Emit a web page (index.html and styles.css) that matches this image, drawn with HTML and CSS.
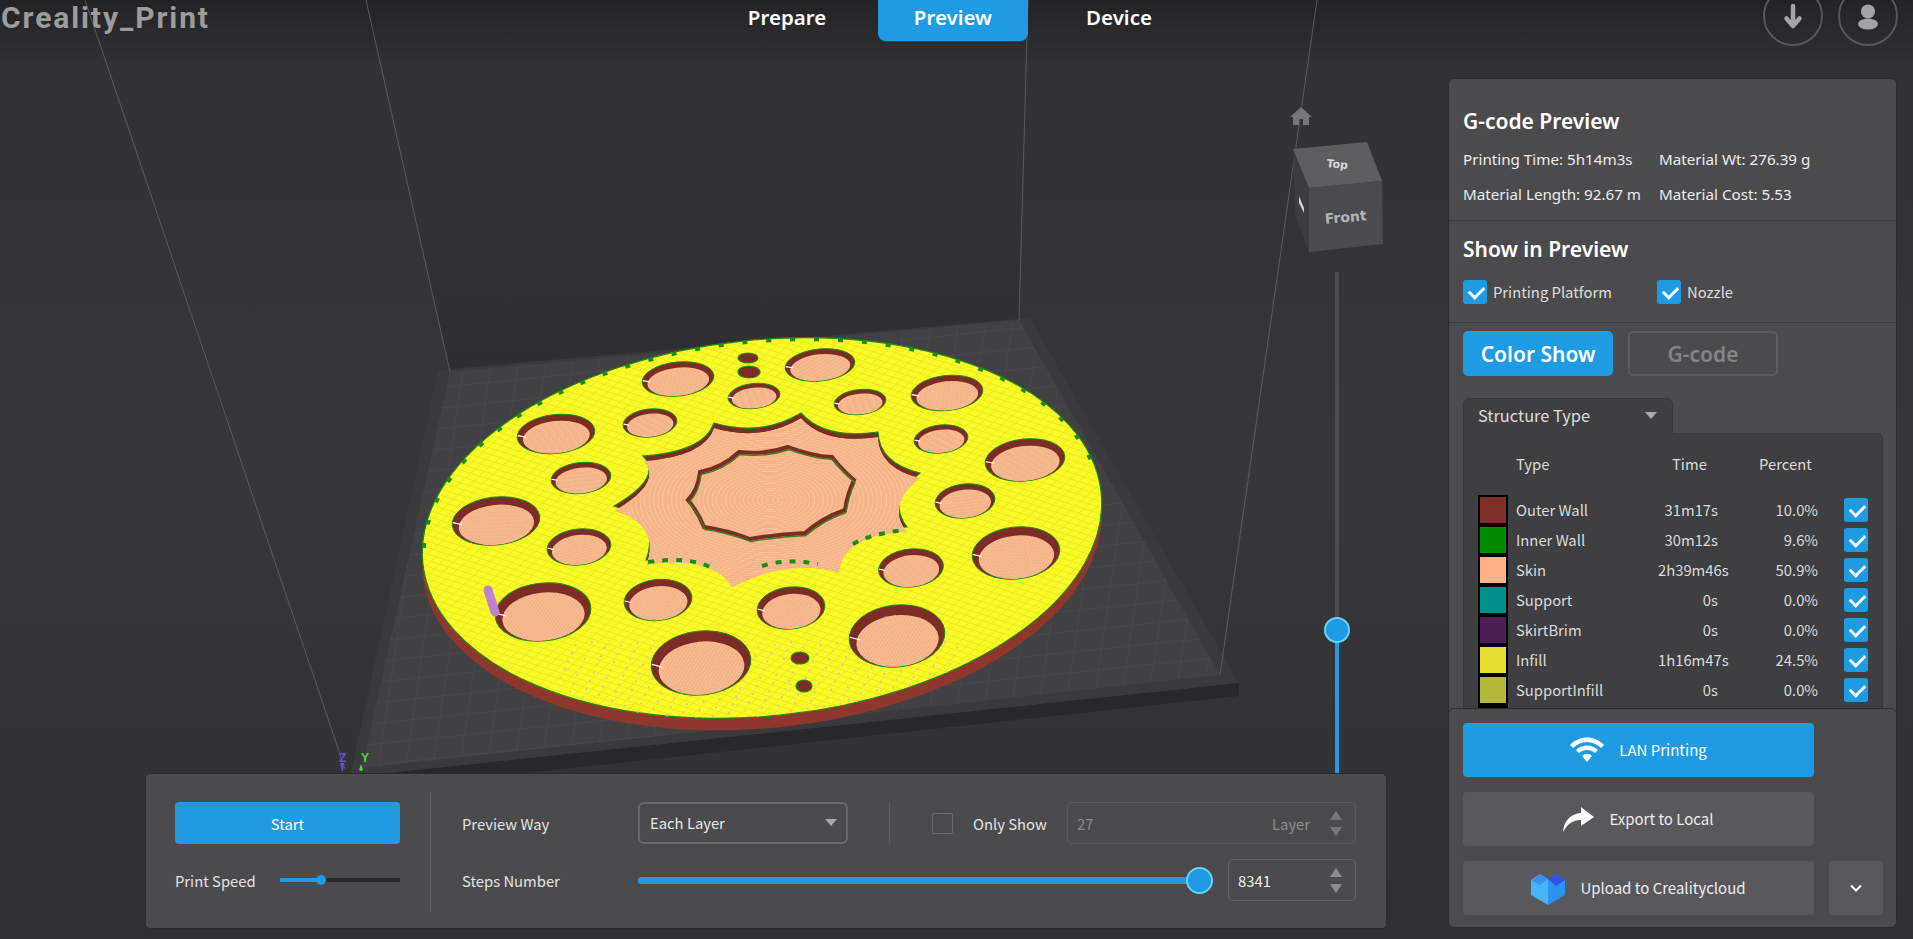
FILE: index.html
```html
<!DOCTYPE html>
<html lang="en">
<head>
    <meta charset="UTF-8">
    <title>Creality Print</title>
    <link rel="stylesheet" href="styles.css">
</head>
<body>
<div class="app">
    <!-- 3D view -->
    <svg class="scene" viewBox="0 0 1913 939" width="1913" height="939">
        <defs>
            <linearGradient id="bg" x1="0" y1="0" x2="0" y2="1">
                <stop offset="0" stop-color="#232325"/>
                <stop offset="0.07" stop-color="#323234"/>
                <stop offset="0.5" stop-color="#373739"/>
                <stop offset="1" stop-color="#313133"/>
            </linearGradient>
            <linearGradient id="backWall" gradientUnits="userSpaceOnUse" x1="0" y1="150" x2="0" y2="372">
                <stop offset="0" stop-color="#2f2f31" stop-opacity="0"/>
                <stop offset="1" stop-color="#2f2f31"/>
            </linearGradient>
            <pattern id="bedGrid" patternUnits="userSpaceOnUse" width="27" height="21" patternTransform="skewX(-14) rotate(-6)">
                <rect width="27" height="21" fill="#414143"/>
                <path d="M0 0H27M0 0V21" stroke="#4a4a4c" stroke-width="1.2"/>
            </pattern>
            <pattern id="infill" patternUnits="userSpaceOnUse" width="9" height="6" patternTransform="rotate(24) skewX(-30)">
                <rect width="9" height="6" fill="#fbfb28"/>
                <path d="M0 0H9M0 0V6" stroke="#e4e41e" stroke-width="1.2"/>
            </pattern>
            <pattern id="dots" patternUnits="userSpaceOnUse" width="14" height="9" patternTransform="rotate(24)">
                <rect x="3" y="3" width="2" height="2" fill="#f2c08c"/>
            </pattern>
            <radialGradient id="rings" gradientUnits="userSpaceOnUse" cx="0" cy="0" r="3" spreadMethod="repeat" gradientTransform="translate(770 495) scale(1.5 0.8)">
                <stop offset="0" stop-color="#f6b488"/>
                <stop offset="0.6" stop-color="#f6b488"/>
                <stop offset="1" stop-color="#f9c7a2"/>
            </radialGradient>
            <linearGradient id="stripes" gradientUnits="userSpaceOnUse" x1="0" y1="0" x2="0.06" y2="0.03" spreadMethod="repeat">
                <stop offset="0" stop-color="#f5b387"/>
                <stop offset="0.6" stop-color="#f5b387"/>
                <stop offset="1" stop-color="#f9c7a2"/>
            </linearGradient>
            <clipPath id="unit"><circle r="1"/></clipPath>
            <g id="hole">
                <circle r="1" fill="#7c2c24" stroke="#1c8a16" stroke-width="1" vector-effect="non-scaling-stroke"/>
                <ellipse cy="0.16" rx="0.86" ry="0.83" fill="url(#stripes)" clip-path="url(#unit)"/>
                <path d="M-0.98 -0.12L-0.78 0" stroke="#fff" stroke-width="1.2" vector-effect="non-scaling-stroke"/>
            </g>
            <path id="starShape" d="M614 506Q664 477 643 456Q704 452 714 423Q761 437 801 413Q825 440 878 432Q879 463 920 473Q886 500 907 527Q843 530 839 568Q786 553 732 583Q714 550 646 560Q661 520 614 506Z"/>
            <clipPath id="starClip"><use href="#starShape"/></clipPath>
            <path id="innerShape" d="M688 500Q698 490 700 472Q722 468 739 452Q765 455 788 447Q812 456 832 457Q842 470 854 480Q847 495 845 510Q822 518 805 533Q778 534 750 539Q726 530 704 527Q698 512 688 500Z"/>
            <clipPath id="discClip"><ellipse cx="762" cy="528" rx="341" ry="188" transform="rotate(-6 762 528)"/></clipPath>
            <clipPath id="upperRim"><path d="M400 560L1120 470V300H400Z"/></clipPath>
        </defs>
        <rect width="1913" height="939" fill="url(#bg)"/>

        <!-- bed -->
        <path d="M366 0H1028L1019 320L450 372Z" fill="url(#backWall)"/>
        <path d="M350 777L1239 683V696L350 792Z" fill="#29292b"/>
        <path d="M438 370L1030 318L1239 683L350 777Z" fill="#3a3a3c"/>
        <path d="M450 372L1019 320L1220 675L362 768Z" fill="url(#bedGrid)"/>
        <g stroke="#5a5a5c" stroke-width="1" fill="none">
            <path d="M85 0L345 769"/>
            <path d="M366 0L450 372"/>
            <path d="M1028 0L1019 320"/>
            <path d="M1317 0L1220 675"/>
        </g>

        <!-- model -->
        <ellipse cx="762" cy="540" rx="341" ry="188" transform="rotate(-6 762 540)" fill="#8f372c"/>
        <ellipse cx="762" cy="528" rx="341" ry="188" transform="rotate(-6 762 528)" fill="url(#infill)" stroke="#1c8a16" stroke-width="1.2"/>
        <g clip-path="url(#discClip)">
            <path d="M560 640H960V720H560Z" fill="url(#dots)"/>
            <g clip-path="url(#upperRim)">
                <ellipse cx="762" cy="528" rx="341" ry="188" transform="rotate(-6 762 528)" fill="none" stroke="#139013" stroke-width="7" stroke-dasharray="5 19"/>
            </g>
        </g>

        <use href="#hole" transform="translate(678 379) rotate(-6) scale(36 17)"/>
        <use href="#hole" transform="translate(820 365) rotate(-6) scale(35 16)"/>
        <use href="#hole" transform="translate(754 396) rotate(-6) scale(26 12.5)"/>
        <use href="#hole" transform="translate(860 402) rotate(-6) scale(26 12.5)"/>
        <use href="#hole" transform="translate(947 393) rotate(-6) scale(36 17.5)"/>
        <use href="#hole" transform="translate(650 423) rotate(-6) scale(27 14)"/>
        <use href="#hole" transform="translate(556 434) rotate(-6) scale(39 19.5)"/>
        <use href="#hole" transform="translate(941 439) rotate(-6) scale(27 14)"/>
        <use href="#hole" transform="translate(1025 460) rotate(-6) scale(40 21)"/>
        <use href="#hole" transform="translate(581 478) rotate(-6) scale(30 15.5)"/>
        <use href="#hole" transform="translate(965 501) rotate(-6) scale(30 17)"/>
        <use href="#hole" transform="translate(496 521) rotate(-6) scale(44 24)"/>
        <use href="#hole" transform="translate(579 547) rotate(-6) scale(32 18)"/>
        <use href="#hole" transform="translate(1016 553) rotate(-6) scale(44 26)"/>
        <use href="#hole" transform="translate(911 568) rotate(-6) scale(32.5 19)"/>
        <use href="#hole" transform="translate(543 612) rotate(-6) scale(48 29)"/>
        <use href="#hole" transform="translate(658 600) rotate(-6) scale(34 20.5)"/>
        <use href="#hole" transform="translate(791 608) rotate(-6) scale(34 21)"/>
        <use href="#hole" transform="translate(897 636) rotate(-6) scale(48 31)"/>
        <use href="#hole" transform="translate(701 663) rotate(-6) scale(50 32)"/>
        <g fill="#7c2c24" stroke="#1c8a16" stroke-width="1.2">
            <ellipse cx="748" cy="358" rx="10" ry="5"/>
            <ellipse cx="749" cy="372" rx="11" ry="6"/>
            <ellipse cx="800" cy="658" rx="9" ry="6"/>
            <ellipse cx="804" cy="686" rx="8" ry="6"/>
        </g>

        <use href="#starShape" fill="#7c2c24" stroke="#1c8a16" stroke-width="1.2"/>
        <use href="#starShape" transform="translate(0 5)" fill="url(#rings)" clip-path="url(#starClip)"/>
        <path d="M648 562Q690 556 712 568M762 566Q786 558 818 564M853 544Q870 534 904 530" fill="none" stroke="#139013" stroke-width="4" stroke-dasharray="6 8"/>
        <use href="#innerShape" fill="none" stroke="#7c2c24" stroke-width="4"/>
        <use href="#innerShape" fill="none" stroke="#3d7d20" stroke-width="1.4" transform="translate(1 2.5)"/>

        <line x1="488" y1="590" x2="495" y2="612" stroke="#c37fd0" stroke-width="9" stroke-linecap="round"/>

        <!-- axis marks -->
        <text class="axis" x="339" y="762" fill="#6a4be0">Z</text>
        <path d="M340 763l4 0 -1 8h-1z" fill="#6a4be0"/>
        <text class="axis" x="361" y="762" fill="#4fd83a">Y</text>
        <path d="M361 764l-2 6 2 1 2-1z" fill="#4fd83a"/>

        <!-- view cube -->
        <path d="M1301 107l-11 10h3v8h6v-6h4v6h6v-8h3z" fill="#77777a"/>
        <path d="M1293 149L1309 188V252L1295 214Z" fill="#3c3c3e"/>
        <path d="M1293 149L1367 142L1382 181L1309 188Z" fill="#5e5e60"/>
        <path d="M1309 188L1382 181L1383 244L1309 252Z" fill="#4b4b4d"/>
        <text class="cube-top" x="1337" y="168" transform="rotate(6 1337 168)">Top</text>
        <text class="cube-front" x="1346" y="222" transform="rotate(-5 1346 222)">Front</text>
        <path d="M1299 196l5 12v5l-5-10z" fill="#cfcfcf"/>
    </svg>

    <div class="header">
        <div class="title">Creality_Print</div>
        <div class="nav">
            <a class="nav-item">Prepare</a>
            <a class="nav-item active">Preview</a>
            <a class="nav-item">Device</a>
        </div>
        <div class="header-actions">
            <span class="round-btn">
                <svg viewBox="0 0 24 30" width="24" height="30"><path d="M12 5V25M5.5 17.5L12 25l6.5-7.5" fill="none" stroke="#a4a4a6" stroke-width="4.5" stroke-linecap="round" stroke-linejoin="round"/></svg>
            </span>
            <span class="round-btn">
                <svg viewBox="0 0 24 30" width="24" height="30"><circle cx="12" cy="10.5" r="7" fill="#a4a4a6"/><ellipse cx="12" cy="23" rx="10" ry="5.5" fill="#a4a4a6"/></svg>
            </span>
        </div>
    </div>

    <div class="vslider">
        <div class="vslider-fill"></div>
        <div class="vslider-handle"></div>
    </div>

    <!-- right panel -->
    <div class="side-panel">
        <div class="section info">
            <h2>G-code Preview</h2>
            <div class="info-grid">
                <span>Printing Time: 5h14m3s</span><span>Material Wt: 276.39 g</span>
                <span>Material Length: 92.67 m</span><span>Material Cost: 5.53</span>
            </div>
        </div>
        <div class="section show">
            <h2>Show in Preview</h2>
            <div class="show-row">
                <label class="check-label w-platform"><span class="check"></span>Printing Platform</label>
                <label class="check-label"><span class="check"></span>Nozzle</label>
            </div>
        </div>
        <div class="mode-row">
            <button class="mode-btn active">Color Show</button>
            <button class="mode-btn">G-code</button>
        </div>
        <div class="tab">Structure Type<span class="tab-arrow"></span></div>
        <div class="legend">
            <div class="legend-row legend-head">
                <span></span><span>Type</span><span class="head-time">Time</span><span class="head-percent">Percent</span>
            </div>
            <div class="legend-row"><span class="swatch"><i class="c-outer"></i></span><span>Outer Wall</span><span class="num">31m17s</span><span class="num">10.0%</span><span class="check"></span></div>
            <div class="legend-row"><span class="swatch"><i class="c-inner"></i></span><span>Inner Wall</span><span class="num">30m12s</span><span class="num">9.6%</span><span class="check"></span></div>
            <div class="legend-row"><span class="swatch"><i class="c-skin"></i></span><span>Skin</span><span class="num">2h39m46s</span><span class="num">50.9%</span><span class="check"></span></div>
            <div class="legend-row"><span class="swatch"><i class="c-support"></i></span><span>Support</span><span class="num">0s</span><span class="num">0.0%</span><span class="check"></span></div>
            <div class="legend-row"><span class="swatch"><i class="c-skirt"></i></span><span>SkirtBrim</span><span class="num">0s</span><span class="num">0.0%</span><span class="check"></span></div>
            <div class="legend-row"><span class="swatch"><i class="c-infill"></i></span><span>Infill</span><span class="num">1h16m47s</span><span class="num">24.5%</span><span class="check"></span></div>
            <div class="legend-row"><span class="swatch"><i class="c-sinfill"></i></span><span>SupportInfill</span><span class="num">0s</span><span class="num">0.0%</span><span class="check"></span></div>
            <div class="legend-row"><span class="swatch"></span></div>
        </div>

        <div class="actions">
            <button class="action-btn primary row-1">
                <svg viewBox="0 0 34 26" width="34" height="26"><path d="M0 8C9-2 25-2 34 8l-3 3C23 3 11 3 3 11z" fill="#fff"/><path d="M6 13c6-6 16-6 22 0l-3 3c-5-4-11-4-16 0z" fill="#fff"/><path d="M12 19c3-3 7-3 10 0l-5 6z" fill="#fff"/></svg>
                <span class="action-text">LAN Printing</span>
            </button>
            <button class="action-btn row-2">
                <svg viewBox="0 0 31 25" width="31" height="25"><path d="M0 25C1 13 8 7 18 6V0l13 10-13 9v-6C10 13 4 17 0 25z" fill="#fff"/></svg>
                <span class="action-text">Export to Local</span>
            </button>
            <button class="action-btn row-3">
                <svg viewBox="0 0 34 34" width="34" height="34">
                    <path d="M0 9L9 3l8 5v26L0 24z" fill="#46b4f7"/>
                    <path d="M0 9L9 3l8 5-8 6z" fill="#3c8ff0"/>
                    <path d="M17 8l8-5 9 6v15L17 34z" fill="#2a93ef"/>
                    <path d="M17 8l8-5 9 6-9 6z" fill="#3550e8"/>
                </svg>
                <span class="action-text">Upload to Crealitycloud</span>
            </button>
            <button class="action-btn more">
                <svg viewBox="0 0 12 8" width="12" height="8"><path d="M1 1.5l5 5 5-5" fill="none" stroke="#fff" stroke-width="2"/></svg>
            </button>
        </div>
    </div>

    <!-- bottom bar -->
    <div class="bottom-bar">
        <div class="play-col">
            <button class="start-btn">Start</button>
            <div class="speed-row">
                <span>Print Speed</span>
                <div class="speed-track"><div class="speed-fill"></div><div class="speed-handle"></div></div>
            </div>
        </div>
        <div class="bar-divider"></div>
        <div class="controls">
            <div class="control-row">
                <span class="control-label">Preview Way</span>
                <div class="select">Each Layer<span class="select-arrow"></span></div>
                <div class="small-divider"></div>
                <span class="empty-check"></span>
                <span class="only-show">Only Show</span>
                <div class="spin disabled">
                    <span>27</span><span class="spin-unit">Layer</span>
                    <span class="arrows"><i class="up"></i><i class="down"></i></span>
                </div>
            </div>
            <div class="control-row">
                <span class="control-label">Steps Number</span>
                <div class="steps-track"><div class="steps-handle"></div></div>
                <div class="spin steps-input">
                    <span>8341</span>
                    <span class="arrows"><i class="up"></i><i class="down"></i></span>
                </div>
            </div>
        </div>
    </div>
</div>
</body>
</html>
```

FILE: styles.css
```css
* {
    box-sizing: border-box;
}
body {
    margin: 0;
    background: #333335;
    font-family: "Noto Sans CJK SC", "Noto Sans", sans-serif;
    color: #e6e6e6;
    overflow: hidden;
}
button {
    font-family: inherit;
    border: none;
    cursor: pointer;
}
.app {
    position: relative;
    width: 1913px;
    height: 939px;
    overflow: hidden;
}
.scene {
    position: absolute;
    left: 0;
    top: 0;
}
.axis {
    font: 700 12px "Liberation Sans", sans-serif;
}
.cube-top {
    font: 700 11px "DejaVu Sans", sans-serif;
    fill: #d8d8d8;
    text-anchor: middle;
}
.cube-front {
    font: 700 14px "DejaVu Sans", sans-serif;
    fill: #b4b4b4;
    text-anchor: middle;
}

/* header */
.header {
    position: relative;
    display: grid;
    grid-template-columns: 712px 1fr auto;
    height: 42px;
}
.title {
    padding-left: 1px;
    font: 700 30px/35px Roboto, sans-serif;
    letter-spacing: 1.9px;
    color: #9c9c9c;
    white-space: nowrap;
}
.nav {
    display: flex;
    gap: 16px;
}
.nav-item {
    width: 150px;
    height: 41px;
    font: 600 20.5px/35px "Noto Sans", sans-serif;
    color: #fff;
    text-align: center;
    border-radius: 0 0 8px 8px;
}
.nav-item.active {
    background: #1e9be2;
    box-shadow: 0 1px 0 #1a4a66;
}
.header-actions {
    display: flex;
    gap: 15px;
    padding-right: 15px;
    margin-top: -14px;
}
.round-btn {
    display: flex;
    align-items: center;
    justify-content: center;
    width: 60px;
    height: 60px;
    border: 2px solid #57575a;
    border-radius: 50%;
}

/* vertical layer slider */
.vslider {
    position: absolute;
    left: 1335px;
    top: 272px;
    width: 4px;
    height: 502px;
    background: #4d4d50;
}
.vslider-fill {
    position: absolute;
    left: 0;
    bottom: 0;
    width: 4px;
    height: 144px;
    background: #1e9be2;
}
.vslider-handle {
    position: absolute;
    left: -11px;
    top: 345px;
    width: 26px;
    height: 26px;
    border-radius: 50%;
    background: #1e9be2;
    border: 2px solid #6ad2fa;
}

/* right panel */
.side-panel {
    position: absolute;
    left: 1448px;
    top: 78px;
    width: 449px;
    height: 850px;
    background: #4b4b4d;
    border: 1px solid #2c2c2e;
    border-radius: 6px;
    padding: 0;
    overflow: hidden;
}
.section {
    padding-left: 14px;
    border-bottom: 1px solid #3a3a3c;
    font-family: "Noto Sans", sans-serif;
}
.section h2 {
    margin: 0;
    font: 600 21px/28px "Noto Sans", sans-serif;
    color: #fff;
}
.info {
    height: 142px;
    padding-top: 28px;
}
.info-grid {
    display: grid;
    grid-template-columns: 196px auto;
    row-gap: 13px;
    margin-top: 13px;
    font-size: 15.2px;
    line-height: 22px;
    color: #ececec;
}
.show {
    height: 102px;
    padding-top: 14px;
}
.show-row {
    display: flex;
    margin-top: 17px;
}
.check-label {
    display: flex;
    align-items: center;
    gap: 6px;
    font: 14.8px/24px "Noto Sans CJK SC", sans-serif;
    color: #dedede;
}
.w-platform {
    width: 194px;
}
.check {
    position: relative;
    display: block;
    width: 24px;
    height: 24px;
    border-radius: 3px;
    background: #1e9be2;
}
.check::after {
    content: "";
    position: absolute;
    left: 6px;
    top: 5.5px;
    width: 12px;
    height: 7px;
    border-left: 3px solid #f2f8fc;
    border-bottom: 3px solid #f2f8fc;
    transform: rotate(-45deg);
}
.mode-row {
    display: flex;
    gap: 15px;
    padding: 8px 0 0 14px;
}
.mode-btn {
    width: 150px;
    height: 45px;
    border-radius: 5px;
    background: transparent;
    border: 2px solid #5c5c5f;
    color: #848487;
    font: 600 21px "Noto Sans", sans-serif;
}
.mode-btn.active {
    background: #1e9be2;
    border: none;
    color: #fff;
}
.tab {
    position: relative;
    width: 210px;
    height: 36px;
    margin: 22px 0 0 14px;
    padding-left: 14px;
    background: #3f3f41;
    border: 1px solid #38383a;
    border-bottom: none;
    border-radius: 6px 6px 0 0;
    font-size: 16.4px;
    line-height: 33px;
    color: #dcdcdc;
}
.tab-arrow {
    position: absolute;
    right: 15px;
    top: 13px;
    border: 6px solid transparent;
    border-top: 7px solid #a8a8aa;
    border-bottom: none;
}
.legend {
    width: 420px;
    height: 300px;
    margin: -1px 0 0 14px;
    padding: 14px 0 0 14px;
    background: #3f3f41;
    border: 1px solid #38383a;
    border-radius: 0 6px 0 0;
    font-size: 14.8px;
    color: #dadada;
}
.legend-row {
    display: grid;
    grid-template-columns: 30px 150px 60px 100px 24px;
    align-items: center;
    height: 30px;
    line-height: 30px;
}
.legend-row > span:nth-child(2) {
    padding-left: 8px;
    white-space: nowrap;
}
.legend-row .check {
    margin-left: 26px;
}
.legend-head {
    height: 32px;
    margin-bottom: 15px;
    grid-template-columns: 30px 164px 87px 100px;
}
.legend-row .num {
    text-align: right;
    white-space: nowrap;
}
.swatch {
    display: block;
    width: 30px;
    height: 30px;
    padding: 2px;
    background: #000;
}
.swatch i {
    display: block;
    width: 26px;
    height: 26px;
}
.c-outer { background: #7f2f28; }
.c-inner { background: #008c00; }
.c-skin { background: #ffb286; }
.c-support { background: #008f8c; }
.c-skirt { background: #4d1f57; }
.c-infill { background: #e6dc32; }
.c-sinfill { background: #b4b83a; }

.actions {
    position: absolute;
    left: -1px;
    bottom: -1px;
    width: 449px;
    height: 220px;
    display: grid;
    grid-template-columns: 351px 54px;
    grid-template-rows: 54px 54px 54px;
    gap: 15px;
    padding: 14px;
    background: #4b4b4d;
    border: 1px solid #2c2c2e;
    border-radius: 6px;
}
.action-btn {
    display: flex;
    align-items: center;
    justify-content: center;
    gap: 15px;
    border-radius: 4px;
    background: #59595d;
    color: #ececec;
    font-size: 15px;
    white-space: nowrap;
}
.action-text {
    margin-bottom: 2px;
}
.action-btn.primary {
    background: #1e9be2;
    color: #fff;
}
.row-1 { grid-column: 1; grid-row: 1; }
.row-2 { grid-column: 1; grid-row: 2; }
.row-3 { grid-column: 1; grid-row: 3; }
.more { grid-column: 2; grid-row: 3; }

/* bottom bar */
.bottom-bar {
    position: absolute;
    left: 145px;
    top: 773px;
    width: 1242px;
    height: 156px;
    display: flex;
    background: #4b4b4d;
    border: 1px solid #2c2c2e;
    border-radius: 5px;
    font-size: 14.8px;
    color: #e2e2e2;
}
.play-col {
    width: 225px;
    margin: 28px 0 0 29px;
}
.start-btn {
    width: 225px;
    height: 42px;
    border-radius: 4px;
    background: #1e9be2;
    color: #fff;
    font-size: 14.8px;
}
.speed-row {
    display: flex;
    align-items: center;
    justify-content: space-between;
    height: 42px;
    margin-top: 15px;
}
.speed-track {
    position: relative;
    width: 120px;
    height: 4px;
    background: #2a2a2c;
}
.speed-fill {
    width: 41px;
    height: 4px;
    background: #1e9be2;
}
.speed-handle {
    position: absolute;
    left: 36px;
    top: -3px;
    width: 10px;
    height: 10px;
    border-radius: 50%;
    background: #1e9be2;
}
.bar-divider {
    width: 1px;
    height: 120px;
    margin: 18px 31px 0 30px;
    background: #5c5c5f;
}
.controls {
    display: flex;
    flex-direction: column;
    gap: 15px;
    padding-top: 28px;
}
.control-row {
    display: flex;
    align-items: center;
    height: 42px;
}
.control-label {
    width: 176px;
}
.select {
    position: relative;
    width: 210px;
    height: 42px;
    padding-left: 10px;
    border: 2px solid #69696c;
    border-radius: 6px;
    line-height: 38px;
    color: #e6e6e6;
}
.select-arrow {
    position: absolute;
    right: 9px;
    top: 15px;
    border: 6px solid transparent;
    border-top: 7px solid #a8a8aa;
    border-bottom: none;
}
.small-divider {
    width: 1px;
    height: 42px;
    margin: 0 42px 0 41px;
    background: #5c5c5f;
}
.empty-check {
    width: 21px;
    height: 21px;
    border: 1px solid #6c6c6f;
    border-radius: 2px;
}
.only-show {
    width: 94px;
    margin-left: 20px;
    white-space: nowrap;
}
.spin {
    position: relative;
    display: flex;
    align-items: center;
    width: 289px;
    height: 42px;
    padding-left: 9px;
    border: 1px solid #636366;
    border-radius: 5px;
}
.spin.disabled {
    border-color: #5a5a5d;
    color: #8a8a8d;
}
.spin-unit {
    position: absolute;
    right: 45px;
}
.arrows {
    position: absolute;
    right: 13px;
    top: 8px;
}
.arrows i {
    display: block;
    border: 6px solid transparent;
    border-top: none;
    border-bottom: 9px solid #8e8e90;
}
.arrows i.down {
    margin-top: 7px;
    border: 6px solid transparent;
    border-bottom: none;
    border-top: 9px solid #8e8e90;
}
.spin.disabled .arrows i {
    opacity: 0.65;
}
.steps-track {
    position: relative;
    width: 575px;
    height: 7px;
    margin-right: 15px;
    background: #1e9be2;
    border-radius: 3px;
}
.steps-handle {
    position: absolute;
    right: 0;
    top: -10px;
    width: 27px;
    height: 27px;
    border-radius: 50%;
    background: #1e9be2;
    border: 2px solid #6ad2fa;
}
.steps-input {
    width: 128px;
    color: #f0f0f0;
}
```
